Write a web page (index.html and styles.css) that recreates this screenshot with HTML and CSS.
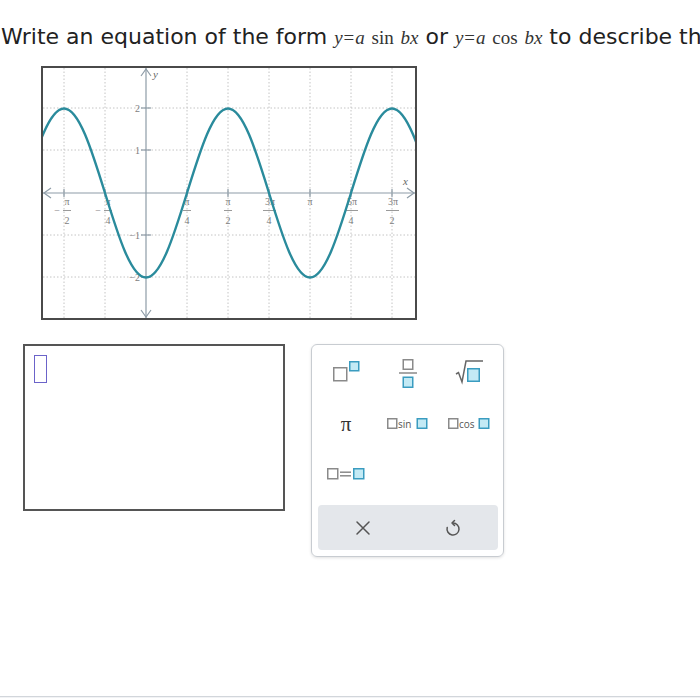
FILE: index.html
```html
<!DOCTYPE html>
<html>
<head>
<meta charset="utf-8">
<link rel="stylesheet" href="styles.css">
</head>
<body>
<div class="title">Write an equation of the form <span class="m"><i>y</i><span class="eq">=</span><i>a</i> sin <i>b</i><i>x</i></span> or <span class="m"><i>y</i><span class="eq">=</span><i>a</i> cos <i>b</i><i>x</i></span> to describe the graph below.</div>

<div class="graph">
<svg width="376" height="254" viewBox="0 0 376 254">
  <defs>
    <clipPath id="plot"><rect x="2" y="2" width="372" height="250"/></clipPath>
  </defs>
  <rect x="0" y="0" width="376" height="254" fill="#fff"/>
  <g class="grid">
    <line x1="23" y1="2" x2="23" y2="252"/>
    <line x1="64" y1="2" x2="64" y2="252"/>
    <line x1="146" y1="2" x2="146" y2="252"/>
    <line x1="187" y1="2" x2="187" y2="252"/>
    <line x1="228" y1="2" x2="228" y2="252"/>
    <line x1="269" y1="2" x2="269" y2="252"/>
    <line x1="310" y1="2" x2="310" y2="252"/>
    <line x1="351" y1="2" x2="351" y2="252"/>
    <line x1="2" y1="42" x2="374" y2="42"/>
    <line x1="2" y1="84" x2="374" y2="84"/>
    <line x1="2" y1="169" x2="374" y2="169"/>
    <line x1="2" y1="211" x2="374" y2="211"/>
  </g>
  <g class="axis">
    <line x1="2" y1="127" x2="374" y2="127"/>
    <line x1="105" y1="2" x2="105" y2="252"/>
    <polyline points="10,122 3,127 10,132"/>
    <polyline points="366,122 373,127 366,132"/>
    <polyline points="100,10 105,3 110,10"/>
    <polyline points="100,244 105,251 110,244"/>
    <line x1="23" y1="123" x2="23" y2="131"/>
    <line x1="64" y1="123" x2="64" y2="131"/>
    <line x1="146" y1="123" x2="146" y2="131"/>
    <line x1="187" y1="123" x2="187" y2="131"/>
    <line x1="228" y1="123" x2="228" y2="131"/>
    <line x1="269" y1="123" x2="269" y2="131"/>
    <line x1="310" y1="123" x2="310" y2="131"/>
    <line x1="351" y1="123" x2="351" y2="131"/>
    <line x1="100" y1="42" x2="110" y2="42"/>
    <line x1="100" y1="84" x2="110" y2="84"/>
    <line x1="100" y1="169" x2="110" y2="169"/>
    <line x1="100" y1="211" x2="110" y2="211"/>
  </g>
  <g class="lbl">
    <text x="99" y="45.5" text-anchor="end">2</text>
    <text x="99" y="87.5" text-anchor="end">1</text>
    <text x="99" y="172.5" text-anchor="end">−1</text>
    <text x="99" y="214.5" text-anchor="end">−2</text>
    <text x="16" y="147.5" text-anchor="middle">−</text>
    <text x="26" y="139" text-anchor="middle">π</text>
    <text x="26" y="158" text-anchor="middle">2</text>
    <text x="57" y="147.5" text-anchor="middle">−</text>
    <text x="67" y="139" text-anchor="middle">π</text>
    <text x="67" y="158" text-anchor="middle">4</text>
    <text x="146" y="139" text-anchor="middle">π</text>
    <text x="146" y="158" text-anchor="middle">4</text>
    <text x="187" y="139" text-anchor="middle">π</text>
    <text x="187" y="158" text-anchor="middle">2</text>
    <text x="229" y="139" text-anchor="middle">3π</text>
    <text x="228" y="158" text-anchor="middle">4</text>
    <text x="269" y="139" text-anchor="middle">π</text>
    <text x="311" y="139" text-anchor="middle">5π</text>
    <text x="310" y="158" text-anchor="middle">4</text>
    <text x="352" y="139" text-anchor="middle">3π</text>
    <text x="351" y="158" text-anchor="middle">2</text>
    <text class="var" x="112" y="12">y</text>
    <text class="var" x="362" y="119">x</text>
  </g>
  <g class="bars">
    <line x1="22" y1="144.5" x2="30" y2="144.5"/>
    <line x1="63" y1="144.5" x2="71" y2="144.5"/>
    <line x1="142" y1="144.5" x2="150" y2="144.5"/>
    <line x1="183" y1="144.5" x2="191" y2="144.5"/>
    <line x1="222" y1="144.5" x2="235" y2="144.5"/>
    <line x1="304" y1="144.5" x2="317" y2="144.5"/>
    <line x1="345" y1="144.5" x2="358" y2="144.5"/>
  </g>
  <path class="curve" clip-path="url(#plot)" d="M -18 127 C -4.63 83.71 8.16 42.5 23 42.5 C 37.84 42.5 50.63 83.71 64 127 C 77.37 170.29 90.16 211.5 105 211.5 C 119.84 211.5 132.63 170.29 146 127 C 159.37 83.71 172.16 42.5 187 42.5 C 201.84 42.5 214.63 83.71 228 127 C 241.37 170.29 254.16 211.5 269 211.5 C 283.84 211.5 296.63 170.29 310 127 C 323.37 83.71 336.16 42.5 351 42.5 C 365.84 42.5 378.63 83.71 392 127"/>
  <rect class="frame" x="1" y="1" width="374" height="252"/>
</svg>
</div>

<div class="work">
  <div class="answer"><span class="cursor"></span></div>
  <div class="keypad">
    <div class="keys">
      <div class="key">
        <svg width="30" height="30" viewBox="0 0 30 30">
          <rect class="bx" x="2.75" y="8.75" width="13" height="13"/>
          <rect class="bb" x="18.75" y="2.75" width="9" height="9"/>
        </svg>
      </div>
      <div class="key">
        <svg width="30" height="30" viewBox="0 0 30 30">
          <rect class="bx" x="10.25" y="0.75" width="9.5" height="9.5"/>
          <line class="ln" x1="6" y1="14" x2="24" y2="14"/>
          <rect class="bb" x="10.25" y="18.25" width="9.5" height="10"/>
        </svg>
      </div>
      <div class="key">
        <svg width="30" height="30" viewBox="0 0 30 30">
          <path class="rad" d="M1 15 L3.5 13.5 L7 23 L11 2 L28 2"/>
          <rect class="bb" x="12.75" y="9.75" width="11.5" height="12.5"/>
        </svg>
      </div>
      <div class="key"><span class="pi">π</span></div>
      <div class="key">
        <svg width="42" height="14" viewBox="0 0 42 14">
          <rect class="bx" x="0.75" y="1.75" width="9" height="9.5"/>
          <text class="fn" x="11" y="10.5">sin</text>
          <rect class="bb" x="30.25" y="1.75" width="9.5" height="9.5"/>
        </svg>
      </div>
      <div class="key">
        <svg width="44" height="14" viewBox="0 0 44 14">
          <rect class="bx" x="0.75" y="1.75" width="9" height="9.5"/>
          <text class="fn" x="11" y="10.5">cos</text>
          <rect class="bb" x="31.25" y="1.75" width="9.5" height="9.5"/>
        </svg>
      </div>
      <div class="key">
        <svg width="40" height="14" viewBox="0 0 40 14">
          <rect class="bx" x="1.75" y="1.75" width="10" height="10"/>
          <line class="ln" x1="14" y1="5.2" x2="25" y2="5.2"/>
          <line class="ln" x1="14" y1="8.8" x2="25" y2="8.8"/>
          <rect class="bb" x="27.75" y="1.75" width="10" height="10"/>
        </svg>
      </div>
    </div>
    <div class="actions">
      <div class="act">
        <svg width="16" height="16" viewBox="0 0 16 16">
          <path class="ic" d="M2 2 L14 14 M14 2 L2 14"/>
        </svg>
      </div>
      <div class="act">
        <svg width="18" height="18" viewBox="0 0 18 18">
          <path class="ic" d="M9 4 A6 6 0 1 1 3.2 8.5"/>
          <path class="ic" d="M10.5 1.5 L8 4 L10.5 6.5"/>
        </svg>
      </div>
    </div>
  </div>
</div>

<div class="footer"></div>
</body>
</html>
```

FILE: styles.css
```css
html, body {
  margin: 0;
  padding: 0;
  overflow: hidden;
  background: #fff;
}

body {
  width: 700px;
  height: 698px;
  font-family: "DejaVu Sans", Verdana, sans-serif;
  color: #222;
  display: flex;
  flex-direction: column;
}

.title {
  height: 26px;
  padding: 24px 0 0 1px;
  font-size: 22px;
  line-height: 26px;
  white-space: nowrap;
  overflow: hidden;
  color: #222;
}

.m {
  font-family: "Liberation Serif", "Times New Roman", serif;
  font-size: 19px;
  line-height: 1;
  word-spacing: 2px;
  color: #333;
}

.m i {
  font-style: italic;
}

.eq {
  margin: 0 1px;
}

.graph {
  margin: 16px 0 0 41px;
  height: 254px;
}

.graph svg {
  display: block;
}

.grid line {
  stroke: #c4c4c4;
  stroke-width: 1;
  stroke-dasharray: 1.5 2;
}

.axis line, .axis polyline {
  stroke: #8e9ca7;
  stroke-width: 1.2;
  fill: none;
}

.lbl text {
  font-family: "Liberation Serif", "Times New Roman", serif;
  font-size: 10px;
  fill: #7d7d7d;
}

.lbl text.var {
  font-style: italic;
  font-size: 11px;
  fill: #666;
}

.bars line {
  stroke: #9a9a9a;
  stroke-width: 1;
}

.curve {
  fill: none;
  stroke: #2a8b9c;
  stroke-width: 2.4;
}

.frame {
  fill: none;
  stroke: #4a4a4a;
  stroke-width: 2;
}

.work {
  display: flex;
  align-items: flex-start;
  gap: 26px;
  margin-top: 24px;
  padding-left: 23px;
}

.answer {
  box-sizing: border-box;
  width: 262px;
  height: 167px;
  border: 2px solid #555;
  padding: 9px 0 0 9px;
}

.cursor {
  display: block;
  box-sizing: border-box;
  width: 13px;
  height: 28px;
  border: 1.5px solid #6b63c9;
}

.keypad {
  box-sizing: border-box;
  width: 193px;
  height: 213px;
  border: 1px solid #c8ccd1;
  border-radius: 6px;
  box-shadow: 0 1px 3px rgba(0, 0, 0, 0.12);
  display: flex;
  flex-direction: column;
}

.keys {
  display: grid;
  grid-template-columns: repeat(3, 62px);
  grid-auto-rows: 50px;
  margin: 4px 0 0 3px;
}

.key {
  display: flex;
  align-items: center;
  justify-content: center;
}

.key svg {
  display: block;
}

.bx {
  fill: #fff;
  stroke: #8a8a8a;
  stroke-width: 1.5;
}

.bb {
  fill: #c3eaf5;
  stroke: #3a9cc0;
  stroke-width: 1.5;
}

.ln {
  stroke: #8a8a8a;
  stroke-width: 1.5;
}

.rad {
  fill: none;
  stroke: #666;
  stroke-width: 1.5;
}

.fn {
  font-family: "Open Sans", "DejaVu Sans", sans-serif;
  font-size: 10px;
  fill: #555;
}

.pi {
  font-family: "Liberation Serif", serif;
  font-size: 21px;
  color: #333;
  line-height: 1;
}

.actions {
  display: flex;
  height: 45px;
  margin: 6px 5px 0 6px;
  background: #e4e7eb;
  border-radius: 4px;
}

.act {
  flex: 1;
  display: flex;
  align-items: center;
  justify-content: center;
}

.act svg {
  display: block;
}

.ic {
  fill: none;
  stroke: #555;
  stroke-width: 1.5;
  stroke-linecap: round;
  stroke-linejoin: round;
}

.footer {
  margin-top: auto;
  height: 1px;
  border-top: 1px solid #d2d6db;
  background: #f2f3f5;
}
```
